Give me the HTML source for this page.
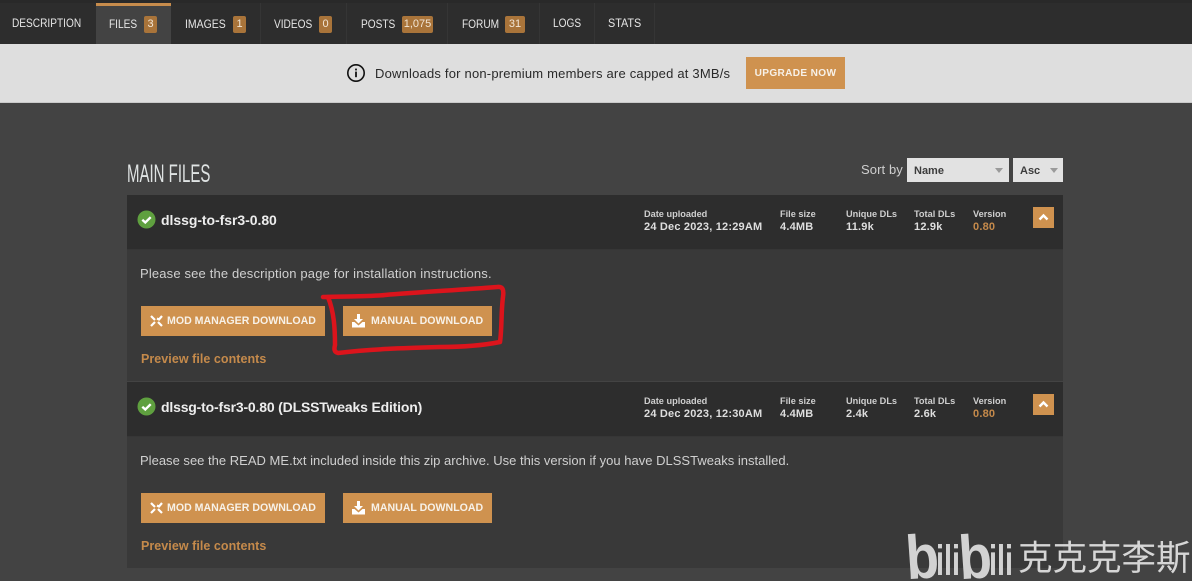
<!DOCTYPE html>
<html><head><meta charset="utf-8">
<style>
html,body{margin:0;padding:0}
body{width:1192px;height:581px;overflow:hidden;position:relative;background:#434343;font-family:"Liberation Sans",sans-serif;color:#e4e4e4}
.a{position:absolute;white-space:nowrap}
.nav{left:0;top:0;width:1192px;height:44px;background:#2d2d2d;border-top:3px solid #292929;box-sizing:border-box}
.tab{font-size:11.5px;color:#e6e6e6;line-height:14px;transform-origin:0 0}
.sep{top:3px;width:1px;height:41px;background:#353535}
.bd{height:17px;background:#a9743a;border-radius:2px;color:#f2e6d6;font-size:11px;line-height:17px;text-align:center}
.hd{left:127px;width:936px;height:55px;background:#2d2d2d}
.bdy{left:127px;width:936px;height:131px;background:#393939}
.lb{font-size:9.2px;font-weight:bold;color:#cfcfcf;line-height:12px}
.v{font-size:11px;font-weight:bold;color:#dedede;line-height:13px;letter-spacing:.2px}
.btn{height:30px;background:#cf924f;color:#f7f1e8;font-size:10.6px;font-weight:bold;line-height:30px;box-sizing:border-box}
.pv{font-size:12.5px;font-weight:bold;color:#c58a4b;line-height:15px;letter-spacing:.05px}
.t{font-size:14px;font-weight:bold;color:#ededed;line-height:16px}
.d{font-size:13px;color:#d0d0d0;line-height:15px}
.up{left:1033px;width:21px;height:21px;background:#cf924f}
</style></head><body>
<div class="a nav"></div>
<div class="a" style="left:96px;top:3px;width:75px;height:41px;background:#434343;border-top:3px solid #c78c4c;box-sizing:border-box"></div>
<div class="a sep" style="left:260px"></div>
<div class="a sep" style="left:346px"></div>
<div class="a sep" style="left:447px"></div>
<div class="a sep" style="left:539px"></div>
<div class="a sep" style="left:594px"></div>
<div class="a sep" style="left:654px"></div>
<div class="a tab" style="left:12px;top:17px;transform:scaleX(.88)">DESCRIPTION</div>
<div class="a tab" style="left:109px;top:18px;transform:scaleX(.88)">FILES</div><div class="a bd" style="left:144px;top:16px;width:13px">3</div>
<div class="a tab" style="left:185px;top:18px;transform:scaleX(.91)">IMAGES</div><div class="a bd" style="left:233px;top:16px;width:13px">1</div>
<div class="a tab" style="left:274px;top:18px;transform:scaleX(.88)">VIDEOS</div><div class="a bd" style="left:319px;top:16px;width:13px">0</div>
<div class="a tab" style="left:361px;top:18px;transform:scaleX(.88)">POSTS</div><div class="a bd" style="left:402px;top:16px;width:31px">1,075</div>
<div class="a tab" style="left:462px;top:18px;transform:scaleX(.88)">FORUM</div><div class="a bd" style="left:505px;top:16px;width:20px">31</div>
<div class="a tab" style="left:553px;top:17px;transform:scaleX(.88)">LOGS</div>
<div class="a tab" style="left:608px;top:17px;transform:scaleX(.94)">STATS</div>

<div class="a" style="left:0;top:44px;width:1192px;height:59px;background:#dedede;border-bottom:1px solid #c9c9c9;box-sizing:border-box"></div>
<svg class="a" style="left:346px;top:63px" width="20" height="20" viewBox="0 0 20 20"><circle cx="10" cy="10" r="8.2" fill="none" stroke="#111" stroke-width="1.6"/><rect x="9.1" y="8.6" width="1.8" height="5.6" fill="#111"/><rect x="9.1" y="5.6" width="1.8" height="1.8" fill="#111"/></svg>
<div class="a" style="left:375px;top:66px;font-size:13px;line-height:15px;color:#2a2a2a;letter-spacing:.2px">Downloads for non-premium members are capped at 3MB/s</div>
<div class="a btn" style="left:746px;top:57px;width:99px;height:32px;line-height:33px;text-align:center;font-size:10.1px;letter-spacing:.35px">UPGRADE NOW</div>

<div class="a" style="left:127px;top:160px;font-size:25px;line-height:28px;color:#dfe3e3;transform:scaleX(.6);transform-origin:0 0;font-weight:normal">MAIN FILES</div>
<div class="a" style="left:861px;top:162px;font-size:13px;line-height:15px;color:#cfcfcf;letter-spacing:.1px">Sort by</div>
<div class="a" style="left:907px;top:158px;width:102px;height:24px;background:#e2e2e2;color:#3c3c3c;font-size:11px;font-weight:bold;line-height:26px;text-indent:7px">Name</div>
<div class="a" style="left:1013px;top:158px;width:50px;height:24px;background:#e2e2e2;color:#3c3c3c;font-size:11px;font-weight:bold;line-height:26px;text-indent:7px">Asc</div>
<svg class="a" style="left:990px;top:166px" width="70" height="8"><path d="M5 2h8l-4 5zM60 2h8l-4 5z" fill="#9a9a9a"/></svg>

<!-- File 1 -->
<div class="a hd" style="top:195px"></div>
<div class="a" style="left:127px;top:249px;width:936px;height:2px;background:#363636"></div>
<div class="a bdy" style="top:250px"></div>
<svg class="a" style="left:137px;top:210px" width="19" height="19" viewBox="0 0 19 19"><circle cx="9.500" cy="9.500" r="9" fill="#5fa03f"/><path d="M5.300 9.700l3 2.800 5.400-5.300" fill="none" stroke="#fff" stroke-width="2.400"/></svg>
<div class="a t" style="left:161px;top:212px;letter-spacing:-.05px">dlssg-to-fsr3-0.80</div>
<div class="a lb" style="left:644px;top:208px">Date uploaded</div><div class="a v" style="left:644px;top:221px">24 Dec 2023, 12:29AM</div>
<div class="a lb" style="left:780px;top:208px">File size</div><div class="a v" style="left:780px;top:221px">4.4MB</div>
<div class="a lb" style="left:846px;top:208px">Unique DLs</div><div class="a v" style="left:846px;top:221px">11.9k</div>
<div class="a lb" style="left:914px;top:208px">Total DLs</div><div class="a v" style="left:914px;top:221px">12.9k</div>
<div class="a lb" style="left:973px;top:208px">Version</div><div class="a v" style="left:973px;top:221px;color:#c58a4b">0.80</div>
<div class="a up" style="top:207px"></div>
<svg class="a" style="left:1033px;top:207px" width="21" height="21"><path d="M6.500 12.500l4-4 4 4" fill="none" stroke="#fff" stroke-width="2.400"/></svg>
<div class="a d" style="left:140px;top:266px;letter-spacing:.16px">Please see the description page for installation instructions.</div>
<div class="a btn" style="left:141px;top:306px;width:184px;padding-left:26px">MOD MANAGER DOWNLOAD</div>
<svg class="a" style="left:149px;top:314px" width="15" height="14" viewBox="0 0 15 14"><path d="M2 2l4 4M13 2l-3 3.500-2-1M6 8l-4 4M9 8l4 4" fill="none" stroke="#fff" stroke-width="2.200"/></svg>
<div class="a btn" style="left:343px;top:306px;width:149px;padding-left:28px">MANUAL DOWNLOAD</div>
<svg class="a" style="left:351px;top:314px" width="15" height="14" viewBox="0 0 15 14"><path d="M6 0h3v5h3l-4.500 4.500L3 5h3zM1 8h2.500l4 3.500 4-3.500H14v5.500H1z" fill="#fff"/></svg>
<div class="a pv" style="left:141px;top:352px">Preview file contents</div>

<!-- File 2 -->
<div class="a hd" style="top:382px"></div>
<div class="a" style="left:127px;top:436px;width:936px;height:2px;background:#363636"></div>
<div class="a bdy" style="top:437px"></div>
<svg class="a" style="left:137px;top:397px" width="19" height="19" viewBox="0 0 19 19"><circle cx="9.500" cy="9.500" r="9" fill="#5fa03f"/><path d="M5.300 9.700l3 2.800 5.400-5.300" fill="none" stroke="#fff" stroke-width="2.400"/></svg>
<div class="a t" style="left:161px;top:399px;letter-spacing:-.18px">dlssg-to-fsr3-0.80 (DLSSTweaks Edition)</div>
<div class="a lb" style="left:644px;top:395px">Date uploaded</div><div class="a v" style="left:644px;top:408px">24 Dec 2023, 12:30AM</div>
<div class="a lb" style="left:780px;top:395px">File size</div><div class="a v" style="left:780px;top:408px">4.4MB</div>
<div class="a lb" style="left:846px;top:395px">Unique DLs</div><div class="a v" style="left:846px;top:408px">2.4k</div>
<div class="a lb" style="left:914px;top:395px">Total DLs</div><div class="a v" style="left:914px;top:408px">2.6k</div>
<div class="a lb" style="left:973px;top:395px">Version</div><div class="a v" style="left:973px;top:408px;color:#c58a4b">0.80</div>
<div class="a up" style="top:394px"></div>
<svg class="a" style="left:1033px;top:394px" width="21" height="21"><path d="M6.500 12.500l4-4 4 4" fill="none" stroke="#fff" stroke-width="2.400"/></svg>
<div class="a d" style="left:140px;top:453px;letter-spacing:.01px">Please see the READ ME.txt included inside this zip archive. Use this version if you have DLSSTweaks installed.</div>
<div class="a btn" style="left:141px;top:493px;width:184px;padding-left:26px">MOD MANAGER DOWNLOAD</div>
<svg class="a" style="left:149px;top:501px" width="15" height="14" viewBox="0 0 15 14"><path d="M2 2l4 4M13 2l-3 3.500-2-1M6 8l-4 4M9 8l4 4" fill="none" stroke="#fff" stroke-width="2.200"/></svg>
<div class="a btn" style="left:343px;top:493px;width:149px;padding-left:28px">MANUAL DOWNLOAD</div>
<svg class="a" style="left:351px;top:501px" width="15" height="14" viewBox="0 0 15 14"><path d="M6 0h3v5h3l-4.500 4.500L3 5h3zM1 8h2.500l4 3.500 4-3.500H14v5.500H1z" fill="#fff"/></svg>
<div class="a pv" style="left:141px;top:539px">Preview file contents</div>

<!-- Red annotation -->
<svg class="a" style="left:0;top:0" width="1192" height="581"><path d="M323 297C345 296 365 297 385 295C420 292 460 290 497 287C503 286 504 290 503 297C501 312 502 328 500 342C480 346 460 347 440 347C405 348 370 349 338 353C334 352 334 349 335 345C335 328 334 312 328 297" fill="none" stroke="#dc141c" stroke-width="4.500" stroke-linecap="round" stroke-linejoin="round"/></svg>

<!-- Watermark -->
<svg class="a" style="left:0;top:0" width="1192" height="581" font-family="Liberation Sans, sans-serif" font-weight="bold" fill="#d2d2d2">
<text x="906" y="578" font-size="62" textLength="33" lengthAdjust="spacingAndGlyphs" transform="rotate(-4 925 560)">b</text>
<text x="936" y="575" font-size="43" textLength="24" lengthAdjust="spacingAndGlyphs">ili</text>
<text x="959" y="578" font-size="62" textLength="33" lengthAdjust="spacingAndGlyphs" transform="rotate(-4 978 560)">b</text>
<text x="989" y="575" font-size="43" textLength="24" lengthAdjust="spacingAndGlyphs">ili</text>
</svg>
<div class="a" style="left:1018px;top:539px;font-family:'Liberation Sans','Noto Sans CJK SC',sans-serif;font-size:34.5px;line-height:40px;color:#d6d6d6">克克克李斯</div>
</body></html>
